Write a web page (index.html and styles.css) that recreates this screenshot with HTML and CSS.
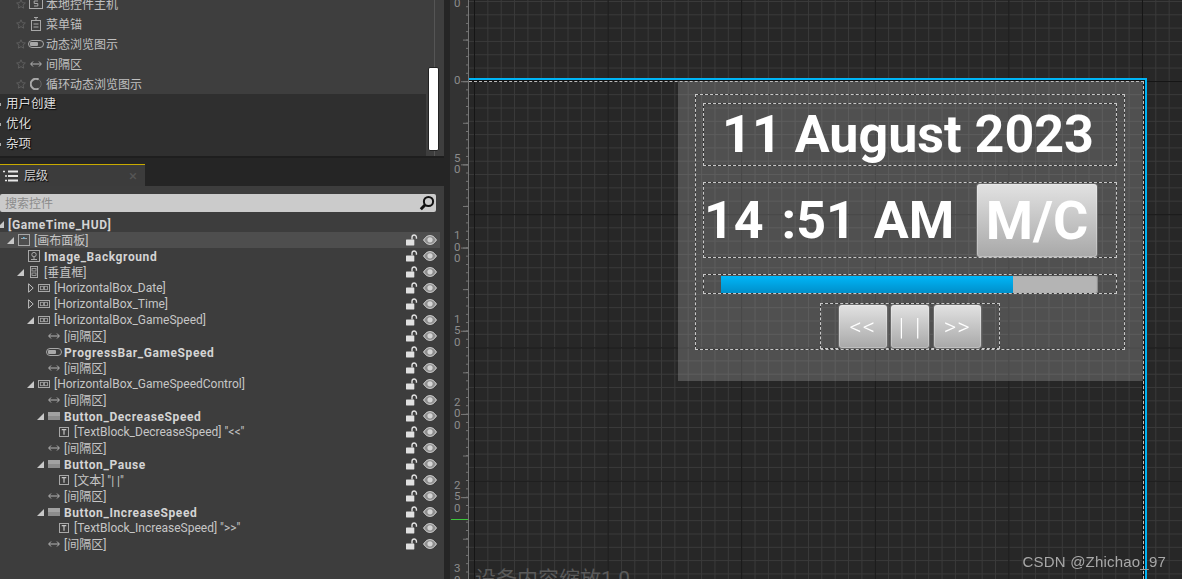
FILE: index.html
```html
<!DOCTYPE html>
<html lang="zh">
<head>
<meta charset="utf-8">
<title>GameTime_HUD</title>
<link rel="stylesheet" href="styles.css">
</head>
<body>
<svg class="defs" width="0" height="0">
  <symbol id="lock" viewBox="0 0 13 12"><rect x="0" y="5.500" width="9" height="6.500" rx=".5" fill="#e0e0e0"/><path d="M6.500 5.500V3a2.400 2.400 0 0 1 4.800 0v1.600" fill="none" stroke="#e0e0e0" stroke-width="1.500"/></symbol>
  <symbol id="eye" viewBox="0 0 14 10"><path d="M.6 5C3 1.400 5 .6 7 .6s4 .8 6.400 4.400C11 8.600 9 9.400 7 9.400S3 8.600.6 5z" fill="#8e8e8e" stroke="#e0e0e0" stroke-width="1"/><circle cx="7" cy="4.800" r="2.600" fill="#d4d4d4"/></symbol>
  <symbol id="canvas" viewBox="0 0 12 12"><rect x=".5" y=".5" width="11" height="11" fill="none" stroke="#a8a8a8"/><path d="M3 4.500h6" stroke="#a8a8a8"/><path d="M5 3h1.600v1.500H5z" fill="#5fb6e0"/></symbol>
  <symbol id="image" viewBox="0 0 12 12"><rect x=".5" y=".5" width="11" height="11" fill="none" stroke="#a8a8a8"/><circle cx="6" cy="4.600" r="2.200" fill="none" stroke="#a8a8a8"/><path d="M6 7v2M3 9.500h6" stroke="#a8a8a8"/></symbol>
  <symbol id="vbox" viewBox="0 0 12 12"><rect x="2.500" y=".5" width="7" height="11" fill="none" stroke="#a8a8a8"/><rect x="4" y="2.500" width="4" height="2.500" fill="none" stroke="#a8a8a8" stroke-width=".8"/><rect x="4" y="7" width="4" height="2.500" fill="none" stroke="#a8a8a8" stroke-width=".8"/></symbol>
  <symbol id="hbox" viewBox="0 0 12 12"><rect x=".5" y="2.500" width="11" height="7" fill="none" stroke="#a8a8a8"/><rect x="2.500" y="4.300" width="3" height="3.400" fill="none" stroke="#a8a8a8" stroke-width=".8"/><rect x="6.500" y="4.300" width="3" height="3.400" fill="none" stroke="#a8a8a8" stroke-width=".8"/></symbol>
  <symbol id="spacer" viewBox="0 0 12 12"><path d="M1 6h10" stroke="#b4b4b4"/><path d="M3 3.500 .6 6 3 8.500M9 3.500 11.400 6 9 8.500" fill="none" stroke="#b4b4b4"/></symbol>
  <symbol id="button" viewBox="0 0 12 12"><rect x="0" y="2" width="12" height="8" fill="#8c8c8c"/><rect x="0" y="2" width="12" height="4" fill="#a2a2a2"/></symbol>
  <symbol id="text" viewBox="0 0 10 10"><rect x=".5" y=".5" width="9" height="9" fill="none" stroke="#a8a8a8"/><path d="M2.700 2.700h4.600M5 2.700v5" stroke="#c4c4c4" stroke-width="1.200"/></symbol>
  <symbol id="progress" viewBox="0 0 16 8"><rect x=".5" y=".5" width="15" height="7" rx="3.500" fill="none" stroke="#a8a8a8"/><rect x="2" y="2" width="8" height="4" rx="1" fill="#a8a8a8"/></symbol>
  <symbol id="star" viewBox="0 0 10 10"><path d="M5 .8 6.300 3.700 9.400 4 7 6.100 7.700 9.200 5 7.600 2.300 9.200 3 6.100 .6 4 3.700 3.700z" fill="none" stroke="#5e5e5e"/></symbol>
  <symbol id="host" viewBox="0 0 14 12"><rect x=".5" y=".5" width="13" height="10" fill="none" stroke="#a8a8a8"/><path d="M9 3H5.200v2.500h3.600V8H5" fill="none" stroke="#a8a8a8"/></symbol>
  <symbol id="anchor" viewBox="0 0 12 14"><rect x="1.500" y="3.500" width="9" height="10" fill="none" stroke="#a8a8a8"/><path d="M4 .5h4M6 .5v3M3.500 7h5M3.500 10h5" stroke="#a8a8a8"/></symbol>
  <symbol id="throbber" viewBox="0 0 12 12"><circle cx="6" cy="6" r="5.200" fill="none" stroke="#666" stroke-width="1"/><path d="M8.600 1.500A5.200 5.200 0 1 0 8.600 10.500" fill="none" stroke="#a8a8a8" stroke-width="2"/></symbol>
  <symbol id="search" viewBox="0 0 16 16"><circle cx="9.500" cy="6.500" r="4.600" fill="none" stroke="#111" stroke-width="2"/><path d="M6 10 1.800 14.200" stroke="#111" stroke-width="3"/></symbol>
  <symbol id="list" viewBox="0 0 16 12"><path d="M6 1.500h10M6 6h10M6 10.500h10" stroke="#e8e8e8" stroke-width="2"/><path d="M1 1.500h2M3 6h2M3 10.500h2" stroke="#e8e8e8" stroke-width="1.500"/></symbol>
  <symbol id="tri" viewBox="0 0 7 7"><path d="M7 0v7H0z" fill="#c8c8c8"/></symbol>
  <symbol id="tri-open" viewBox="0 0 6 10"><path d="M.6.800 5.200 5 .6 9.200z" fill="none" stroke="#c0c0c0"/></symbol>
</svg>

<div class="app">
  <aside class="side">
    <section class="palette">
      <div class="palette-body">
        <ul class="items">
          <li class="item"><svg class="ic-star"><use href="#star"/></svg><span class="ic-slot"><svg class="ic-14"><use href="#host"/></svg></span><span>本地控件主机</span></li>
          <li class="item"><svg class="ic-star"><use href="#star"/></svg><span class="ic-slot"><svg class="ic-anchor"><use href="#anchor"/></svg></span><span>菜单锚</span></li>
          <li class="item"><svg class="ic-star"><use href="#star"/></svg><span class="ic-slot"><svg class="ic-16"><use href="#progress"/></svg></span><span>动态浏览图示</span></li>
          <li class="item"><svg class="ic-star"><use href="#star"/></svg><span class="ic-slot"><svg class="ic-12"><use href="#spacer"/></svg></span><span>间隔区</span></li>
          <li class="item"><svg class="ic-star"><use href="#star"/></svg><span class="ic-slot"><svg class="ic-12"><use href="#throbber"/></svg></span><span>循环动态浏览图示</span></li>
        </ul>
        <ul class="cats">
          <li class="cat">用户创建</li>
          <li class="cat">优化</li>
          <li class="cat">杂项</li>
        </ul>
      </div>
      <div class="scroll"><div class="thumb"></div></div>
    </section>

    <div class="tabstrip">
      <div class="tab">
        <svg class="tab-icon"><use href="#list"/></svg>
        <span class="tab-label">层级</span>
        <span class="tab-close">×</span>
      </div>
    </div>

    <section class="hier">
      <div class="search">
        <span class="cjk">搜索控件</span>
        <svg class="search-icon"><use href="#search"/></svg>
      </div>
      <ul class="tree">
        <li class="row root-row"><svg class="tri-root"><use href="#tri"/></svg><span class="b">[GameTime_HUD]</span></li>
        <li class="row l1 sel"><span class="exp"><svg class="tri"><use href="#tri"/></svg></span><svg class="ic"><use href="#canvas"/></svg><span class="cjk">[画布面板]</span><span class="acts"><svg class="lock"><use href="#lock"/></svg><svg class="eye"><use href="#eye"/></svg></span></li>
        <li class="row l2"><span class="exp"></span><svg class="ic"><use href="#image"/></svg><span class="b">Image_Background</span><span class="acts"><svg class="lock"><use href="#lock"/></svg><svg class="eye"><use href="#eye"/></svg></span></li>
        <li class="row l2"><span class="exp"><svg class="tri"><use href="#tri"/></svg></span><svg class="ic"><use href="#vbox"/></svg><span class="cjk">[垂直框]</span><span class="acts"><svg class="lock"><use href="#lock"/></svg><svg class="eye"><use href="#eye"/></svg></span></li>
        <li class="row l3"><span class="exp"><svg class="tri-o"><use href="#tri-open"/></svg></span><svg class="ic"><use href="#hbox"/></svg><span>[HorizontalBox_Date]</span><span class="acts"><svg class="lock"><use href="#lock"/></svg><svg class="eye"><use href="#eye"/></svg></span></li>
        <li class="row l3"><span class="exp"><svg class="tri-o"><use href="#tri-open"/></svg></span><svg class="ic"><use href="#hbox"/></svg><span>[HorizontalBox_Time]</span><span class="acts"><svg class="lock"><use href="#lock"/></svg><svg class="eye"><use href="#eye"/></svg></span></li>
        <li class="row l3"><span class="exp"><svg class="tri"><use href="#tri"/></svg></span><svg class="ic"><use href="#hbox"/></svg><span>[HorizontalBox_GameSpeed]</span><span class="acts"><svg class="lock"><use href="#lock"/></svg><svg class="eye"><use href="#eye"/></svg></span></li>
        <li class="row l4"><span class="exp"></span><svg class="ic"><use href="#spacer"/></svg><span class="cjk">[间隔区]</span><span class="acts"><svg class="lock"><use href="#lock"/></svg><svg class="eye"><use href="#eye"/></svg></span></li>
        <li class="row l4"><span class="exp"></span><svg class="ic ic-wide"><use href="#progress"/></svg><span class="b">ProgressBar_GameSpeed</span><span class="acts"><svg class="lock"><use href="#lock"/></svg><svg class="eye"><use href="#eye"/></svg></span></li>
        <li class="row l4"><span class="exp"></span><svg class="ic"><use href="#spacer"/></svg><span class="cjk">[间隔区]</span><span class="acts"><svg class="lock"><use href="#lock"/></svg><svg class="eye"><use href="#eye"/></svg></span></li>
        <li class="row l3"><span class="exp"><svg class="tri"><use href="#tri"/></svg></span><svg class="ic"><use href="#hbox"/></svg><span>[HorizontalBox_GameSpeedControl]</span><span class="acts"><svg class="lock"><use href="#lock"/></svg><svg class="eye"><use href="#eye"/></svg></span></li>
        <li class="row l4"><span class="exp"></span><svg class="ic"><use href="#spacer"/></svg><span class="cjk">[间隔区]</span><span class="acts"><svg class="lock"><use href="#lock"/></svg><svg class="eye"><use href="#eye"/></svg></span></li>
        <li class="row l4"><span class="exp"><svg class="tri"><use href="#tri"/></svg></span><svg class="ic"><use href="#button"/></svg><span class="b">Button_DecreaseSpeed</span><span class="acts"><svg class="lock"><use href="#lock"/></svg><svg class="eye"><use href="#eye"/></svg></span></li>
        <li class="row l5"><span class="exp"></span><svg class="ic"><use href="#text"/></svg><span>[TextBlock_DecreaseSpeed] "&lt;&lt;"</span><span class="acts"><svg class="lock"><use href="#lock"/></svg><svg class="eye"><use href="#eye"/></svg></span></li>
        <li class="row l4"><span class="exp"></span><svg class="ic"><use href="#spacer"/></svg><span class="cjk">[间隔区]</span><span class="acts"><svg class="lock"><use href="#lock"/></svg><svg class="eye"><use href="#eye"/></svg></span></li>
        <li class="row l4"><span class="exp"><svg class="tri"><use href="#tri"/></svg></span><svg class="ic"><use href="#button"/></svg><span class="b">Button_Pause</span><span class="acts"><svg class="lock"><use href="#lock"/></svg><svg class="eye"><use href="#eye"/></svg></span></li>
        <li class="row l5"><span class="exp"></span><svg class="ic"><use href="#text"/></svg><span class="cjk">[文本] "| |"</span><span class="acts"><svg class="lock"><use href="#lock"/></svg><svg class="eye"><use href="#eye"/></svg></span></li>
        <li class="row l4"><span class="exp"></span><svg class="ic"><use href="#spacer"/></svg><span class="cjk">[间隔区]</span><span class="acts"><svg class="lock"><use href="#lock"/></svg><svg class="eye"><use href="#eye"/></svg></span></li>
        <li class="row l4"><span class="exp"><svg class="tri"><use href="#tri"/></svg></span><svg class="ic"><use href="#button"/></svg><span class="b">Button_IncreaseSpeed</span><span class="acts"><svg class="lock"><use href="#lock"/></svg><svg class="eye"><use href="#eye"/></svg></span></li>
        <li class="row l5"><span class="exp"></span><svg class="ic"><use href="#text"/></svg><span>[TextBlock_IncreaseSpeed] "&gt;&gt;"</span><span class="acts"><svg class="lock"><use href="#lock"/></svg><svg class="eye"><use href="#eye"/></svg></span></li>
        <li class="row l4"><span class="exp"></span><svg class="ic"><use href="#spacer"/></svg><span class="cjk">[间隔区]</span><span class="acts"><svg class="lock"><use href="#lock"/></svg><svg class="eye"><use href="#eye"/></svg></span></li>
      </ul>
    </section>
  </aside>

  <div class="ruler">
    <span class="mark">50</span><span class="mark">0</span><span class="mark">50</span><span class="mark">100</span><span class="mark">150</span><span class="mark">200</span><span class="mark">250</span><span class="mark">300</span>
    <span class="ruler-cursor"></span>
  </div>

  <main class="canvas">
    <div class="root-frame"><div class="root-dash"></div></div>
    <div class="hud">
      <div class="dash vbox">
        <div class="dash date-row">11 August 2023</div>
        <div class="dash time-row">
          <span class="time">14 :51 AM</span>
          <div class="ue-btn mc">M/C</div>
        </div>
        <div class="dash bar-row">
          <div class="bar"><div class="bar-fill"></div></div>
        </div>
        <div class="dash ctrl-row">
          <div class="ue-btn small wide">&lt;&lt;</div>
          <div class="ue-btn small narrow">| |</div>
          <div class="ue-btn small wide">&gt;&gt;</div>
        </div>
      </div>
    </div>
    <div class="dpi">设备内容缩放1.0</div>
    <div class="watermark">CSDN @Zhichao_97</div>
  </main>
</div>
</body>
</html>
```
FILE: styles.css
```css
* { box-sizing: border-box; }
html, body { margin: 0; height: 100%; overflow: hidden; background: #262626; }
ul { list-style: none; margin: 0; padding: 0; }
.defs { position: absolute; }
svg { display: block; flex: none; }

.app {
  display: flex;
  width: 1182px;
  height: 579px;
  overflow: hidden;
  font-family: Roboto, "Noto Sans CJK SC", sans-serif;
  font-size: 12px;
  color: #c4c4c4;
}

.cjk { margin-bottom: 2px; }

/* left column */
.side {
  width: 450px;
  flex: none;
  display: flex;
  flex-direction: column;
  background: #252525;
  padding-right: 6px;
}

.palette {
  height: 158px;
  flex: none;
  display: flex;
  background: #3e3e3e;
  overflow: hidden;
  border-bottom: 2px solid #1e1e1e;
}
.palette-body { width: 426px; flex: none; }
.items { margin-top: -7px; height: 101px; }
.item { height: 20px; display: flex; align-items: center; padding-left: 16px; color: #c0c0c0; }
.ic-star { width: 10px; height: 10px; margin-top: 2px; }
.ic-slot { width: 20px; display: flex; justify-content: center; margin-top: 2px; }
.ic-14 { width: 14px; height: 12px; }
.ic-12 { width: 12px; height: 12px; }
.ic-16 { width: 16px; height: 8px; }
.ic-anchor { width: 12px; height: 14px; }

.cats { background: #2f2f2f; height: 62px; }
.cat {
  height: 20px;
  line-height: 20px;
  padding-left: 6px;
  font-size: 12.500px;
  color: #dcdcdc;
  text-shadow: 1px 1px 1px #000;
  position: relative;
}
.cat::before { content: ""; position: absolute; left: 0; top: 9px; width: 1px; height: 3px; background: #aaa; }

.scroll { flex: 1; position: relative; }
.scroll::before { content: ""; position: absolute; left: 8px; top: 0; bottom: 0; width: 1px; background: #555; }
.thumb {
  position: absolute;
  left: 2px;
  top: 67px;
  width: 11px;
  height: 84px;
  background: #fff;
  border: 1px solid #222;
  border-radius: 2px;
}

.tabstrip { height: 28px; flex: none; padding-top: 6px; background: #252525; }
.tab {
  width: 145px;
  height: 22px;
  background: #3c3c3c;
  border-top: 1px solid #c8aa00;
  display: flex;
  align-items: center;
  padding-left: 2px;
}
.tab-icon { width: 16px; height: 12px; }
.tab-label { margin-left: 6px; margin-bottom: 3px; color: #d0d0d0; text-shadow: 1px 1px 1px #000; }
.tab-close { margin-left: auto; margin-right: 8px; color: #555; font-size: 15px; }

.hier { flex: 1; background: #3d3d3d; padding-top: 8px; }
.search {
  width: 436px;
  height: 18px;
  background: #cbcbcb;
  border-radius: 2px;
  display: flex;
  align-items: center;
  justify-content: space-between;
  padding: 0 1px 0 5px;
  color: #8c8c8c;
}
.search-icon { width: 16px; height: 16px; }
.tree { margin-top: 4px; }
.row { height: 16px; display: flex; align-items: center; width: 440px; white-space: nowrap; padding-right: 3px; color: #c6c6c6; }
.sel { background: #4e4e4e; }
.b { font-weight: 700; color: #d4d4d4; letter-spacing: .6px; margin-top: 2px; }
.tri-root { width: 7px; height: 7px; margin-left: -3px; margin-right: 4px; }
.l1 { padding-left: 7px; }
.l2 { padding-left: 17px; }
.l3 { padding-left: 27px; }
.l4 { padding-left: 37px; }
.l5 { padding-left: 47px; }
.exp { width: 11px; flex: none; display: flex; align-items: center; }
.tri { width: 7px; height: 7px; }
.tri-o { width: 6px; height: 10px; margin-left: 1px; }
.ic { width: 12px; height: 12px; margin-right: 4px; }
.ic-wide { width: 16px; height: 8px; margin-left: -2px; margin-right: 2px; }
.l5 .ic { width: 10px; height: 10px; margin-left: 1px; margin-right: 5px; }
.acts { margin-left: auto; display: flex; align-items: center; gap: 5px; }
.lock { width: 12px; height: 12px; }
.eye { width: 14px; height: 10px; }

/* vertical ruler */
.ruler {
  width: 19px;
  flex: none;
  position: relative;
  height: 579px;
  background-color: #333;
  border-right: 1px solid #777;
  overflow: hidden;
  background-image:
    linear-gradient(#777 1px, transparent 1px),
    linear-gradient(#777 1px, transparent 1px),
    linear-gradient(#777 1px, transparent 1px);
  background-size: 7px 83.200px, 5px 41.600px, 2px 8.320px;
  background-position: right -2px, right -2px, right 6.300px;
  background-repeat: repeat-y;
  display: flex;
  flex-direction: column;
}
.mark {
  height: 83.200px;
  flex: none;
  display: flex;
  align-items: center;
  width: 14px;
  padding-left: 4px;
  font-size: 11.500px;
  line-height: 11.500px;
  color: #8c8c8c;
  word-break: break-all;
  position: relative;
  top: -43.600px;
}
.ruler-cursor { position: absolute; left: 1px; right: 0; top: 519px; height: 1px; background: #3cc83c; }

/* designer canvas */
.canvas {
  flex: 1;
  position: relative;
  overflow: hidden;
  background-color: #272727;
  background-image:
    linear-gradient(90deg, #151515 1px, transparent 1px),
    linear-gradient(#151515 1px, transparent 1px),
    linear-gradient(90deg, #3a3a3a 1px, transparent 1px),
    linear-gradient(#3a3a3a 1px, transparent 1px);
  background-size: 133.600px 100%, 100% 133.200px, 13.360px 100%, 100% 13.320px;
  background-position: 5px 0, 0 81px, 5px 0, 0 1px;
}
.root-frame {
  position: absolute;
  z-index: 1;
  left: 0;
  top: 78px;
  width: 678px;
  height: 510px;
  border-top: 2px solid #00b4f5;
  border-right: 2px solid #00b4f5;
  box-shadow: inset 0 1px #111, inset -1px 0 #111;
}
.root-dash {
  height: 100%;
  margin-top: 1px;
  margin-right: 1px;
  border-top: 1px dashed #bdbdbd;
  border-right: 1px dashed #bdbdbd;
}
.hud {
  position: absolute;
  left: 209px;
  top: 81px;
  width: 465px;
  height: 300px;
  background: rgba(160, 160, 160, 0.34);
  padding: 13px 0 0 17px;
}
.dash {
  border: 1px solid #333;
  outline: 1px dashed #c8c8c8;
  outline-offset: -1px;
}
.vbox {
  width: 430px;
  height: 256px;
  padding: 8px 7px 0;
  display: flex;
  flex-direction: column;
}
.date-row {
  height: 63px;
  display: flex;
  align-items: center;
  justify-content: center;
  padding-right: 4px;
  font-size: 52px;
  font-weight: 700;
  color: #fff;
  white-space: nowrap;
}
.time-row {
  height: 77px;
  margin-top: 16px;
  display: flex;
  align-items: center;
  color: #fff;
  font-size: 52px;
  font-weight: 700;
  white-space: pre;
  word-spacing: 5px;
}
.time { width: 273px; }
.ue-btn {
  display: flex;
  align-items: center;
  justify-content: center;
  background: linear-gradient(#e2e2e2, #a8a8a8);
  color: #fff;
  border-radius: 3px;
  box-shadow: 0 0 0 1px #6a6a6a, inset 0 0 0 1px rgba(255,255,255,.25);
}
.mc { width: 120px; height: 73px; font-size: 54px; font-weight: 700; }
.bar-row { height: 20px; margin-top: 16px; padding: 1px 18px 0 17px; }
.bar { height: 17px; background: #b4b4b4; border-radius: 0 2px 2px 0; box-shadow: inset -1px 0 1px #888; }
.bar-fill { width: 292px; height: 100%; background: linear-gradient(#00b6f8, #008fca); }
.ctrl-row {
  width: 180px;
  height: 46px;
  margin-top: 9px;
  margin-left: 117px;
  padding: 1px 0 0 18px;
  display: flex;
  gap: 4.500px;
}
.small { height: 43px; font-size: 24px; font-weight: 300; letter-spacing: 1px; word-spacing: 3px; will-change: opacity; }
.wide { width: 47.500px; }
.narrow { width: 38px; }

.dpi {
  position: absolute;
  left: 6px;
  top: 567px;
  font-size: 21px;
  line-height: 24px;
  color: #5a5a5a;
  white-space: nowrap;
}
.watermark {
  position: absolute;
  z-index: 2;
  right: 16px;
  top: 553px;
  font-family: "Liberation Sans", sans-serif;
  font-size: 15px;
  letter-spacing: .2px;
  line-height: 18px;
  color: #a8a8a8;
  white-space: nowrap;
}
```
